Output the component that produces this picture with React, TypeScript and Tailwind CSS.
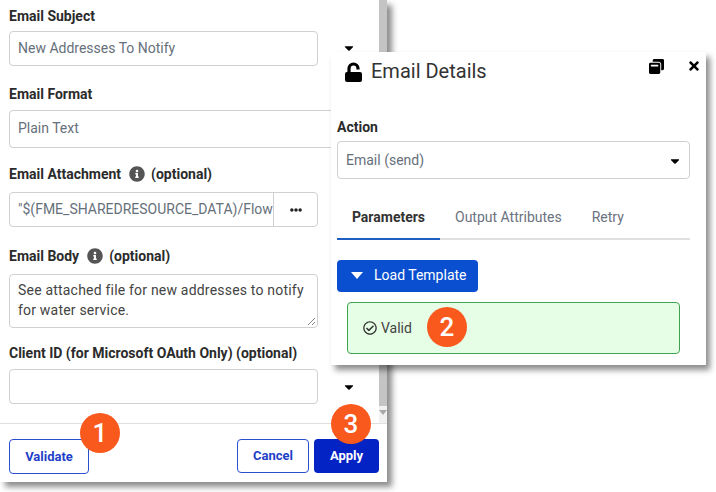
import { FaCaretDown, FaEllipsisH, FaInfoCircle, FaRegCheckCircle, FaTimes, FaWindowRestore } from "react-icons/fa";

const labelClass = "text-[14px] leading-[20px] font-bold text-[#2b2b2b] flex items-center";
const inputClass = "w-[309px] h-[35px] rounded border border-[#d0d0d0] bg-white px-2 flex items-center text-[14px] text-[#66707a]";

function Badge({ n, className }: { n: string; className: string }) {
  return (
    <div className={`absolute w-10 h-10 rounded-full bg-[#f9591c] text-white text-[26px] font-medium flex items-center justify-center ${className}`}>
      {n}
    </div>
  );
}

function Caret({ className }: { className: string }) {
  return <FaCaretDown className={`absolute text-black text-[14px] ${className}`} />;
}

export default function App() {
  return (
    <div className="relative w-[716px] h-[492px] bg-white overflow-hidden font-['Roboto',sans-serif]">
      {/* Left panel */}
      <div className="relative w-[387px] h-[482px] bg-white flex flex-col shadow-[5px_5px_6px_rgba(0,0,0,0.45)]">
        <div className="relative flex-1 pl-[9px] pt-[6px] bg-white">
          <div className={labelClass}>Email Subject</div>
          <div className={`${inputClass} mt-[5px]`}>New Addresses To Notify</div>

          <div className={`${labelClass} mt-[18px]`}>Email Format</div>
          <div className={`${inputClass} mt-[6px] !h-[38px] !w-[360px] pb-[2px]`}>Plain Text</div>

          <div className={`${labelClass} mt-[16px]`}>
            Email Attachment
            <FaInfoCircle className="ml-2 text-[#555] text-[16px]" />
            <span className="ml-[6px]">(optional)</span>
          </div>
          <div className={`${inputClass} mt-[8px] !pr-0 text-[#444] overflow-hidden`}>
            <span className="w-[255px] whitespace-nowrap overflow-hidden">"$(FME_SHAREDRESOURCE_DATA)/Flow</span>
            <div className="flex-1 h-full border-l border-[#d0d0d0] flex items-center justify-center">
              <FaEllipsisH className="text-[#222] text-[12px]" />
            </div>
          </div>

          <div className={`${labelClass} mt-[19px]`}>
            Email Body
            <FaInfoCircle className="ml-2 text-[#555] text-[16px]" />
            <span className="ml-[6px]">(optional)</span>
          </div>
          <div className="relative w-[309px] h-[54px] mt-[8px] rounded border border-[#d0d0d0] px-2 pt-[5px] text-[14px] leading-[20px] tracking-[0.2px] text-[#444]">
            See attached file for new addresses to notify for water service.
            <svg className="absolute right-[1px] bottom-[1px]" width="10" height="10" viewBox="0 0 10 10">
              <path d="M9 2 2 9M9 6 6 9" stroke="#888" strokeWidth="1" />
            </svg>
          </div>

          <div className={`${labelClass} mt-[15px]`}>Client ID (for Microsoft OAuth Only) (optional)</div>
          <div className={`${inputClass} mt-[6px]`} />

          <Caret className="left-[342px] top-[41px]" />
          <Caret className="left-[342px] top-[380px]" />

          {/* Scrollbar */}
          <div className="absolute right-0 top-0 bottom-0 w-[8px] bg-[#f1f1f1]">
            <div className="h-[406px] bg-[#c4c4c4]" />
            <div className="mx-auto mt-[4px] w-0 h-0 border-x-[4px] border-x-transparent border-t-[5px] border-t-[#a8a8a8]" />
          </div>
        </div>

        <div className="h-[59px] border-t border-[#e0e0e0] flex items-start pt-[15px] pl-[9px] pr-[8px] text-[13px] font-bold">
          <button className="w-[80px] h-[35px] rounded border border-[#2c4fd0] text-[#1f3fc8] bg-white">Validate</button>
          <button className="ml-auto w-[72px] h-[34px] rounded border border-[#2c4fd0] text-[#1f3fc8] bg-white">Cancel</button>
          <button className="ml-[5px] w-[65px] h-[34px] rounded bg-[#0423c4] text-white">Apply</button>
        </div>
      </div>

      {/* Email Details window */}
      <div className="absolute left-[331px] top-[52px] w-[375px] h-[313px] bg-white shadow-[4px_5px_6px_rgba(0,0,0,0.45)] px-[6px]">
        <div className="relative flex items-center h-[38px] pl-[8px]">
          <svg width="17" height="20" viewBox="0 0 17 20" className="shrink-0 mt-[2px]">
            <path d="M4 11V6.5a4.5 4.5 0 0 1 9 0V7.5" fill="none" stroke="black" strokeWidth="3.2" />
            <rect x="0" y="10" width="17" height="10" rx="2" fill="black" />
          </svg>
          <span className="ml-[9px] text-[20px] text-[#333]">Email Details</span>
          <FaWindowRestore className="absolute left-[312px] top-[7px] text-black text-[15px]" />
          <FaTimes className="absolute left-[350px] top-[7px] text-black text-[14px]" />
        </div>

        <div className="mt-[27px] text-[14px] leading-[20px] font-bold text-[#2b2b2b]">Action</div>
        <div className="relative mt-[4px] w-[353px] h-[38px] rounded border border-[#d0d0d0] px-2 flex items-center text-[14px] text-[#66707a]">
          Email (send)
          <FaCaretDown className="absolute right-[7px] top-[12px] text-black text-[14px]" />
        </div>

        <div className="mt-[20px] w-[353px] h-[41px] border-b-2 border-[#e0e0e0] flex text-[14px]">
          <div className="w-[103px] h-[41px] border-b-2 border-[#1f5fc4] text-center pt-[8px] font-bold text-[#333]">Parameters</div>
          <div className="ml-[15px] pt-[8px] text-[#6b7280]">Output Attributes</div>
          <div className="ml-[30px] pt-[8px] text-[#6b7280]">Retry</div>
        </div>

        <button className="mt-[20px] w-[141px] h-[32px] rounded bg-[#0a4fd0] text-white text-[14px] flex items-center pl-[14px] pb-[2px]">
          <span className="w-0 h-0 border-x-[6px] border-x-transparent border-t-[7px] border-t-white" />
          <span className="ml-[11px]">Load Template</span>
        </button>

        <div className="mt-[10px] ml-[10px] w-[333px] h-[52px] rounded border border-[#3fa34d] bg-[#e6fde6] flex items-center pl-[15px] text-[14px] text-[#444]">
          <FaRegCheckCircle className="text-[#333] text-[14px]" />
          <span className="ml-[4px]">Valid</span>
        </div>
      </div>

      <Badge n="1" className="left-[80px] top-[413px]" />
      <Badge n="2" className="left-[427px] top-[307px]" />
      <Badge n="3" className="left-[331px] top-[404px]" />
    </div>
  );
}
